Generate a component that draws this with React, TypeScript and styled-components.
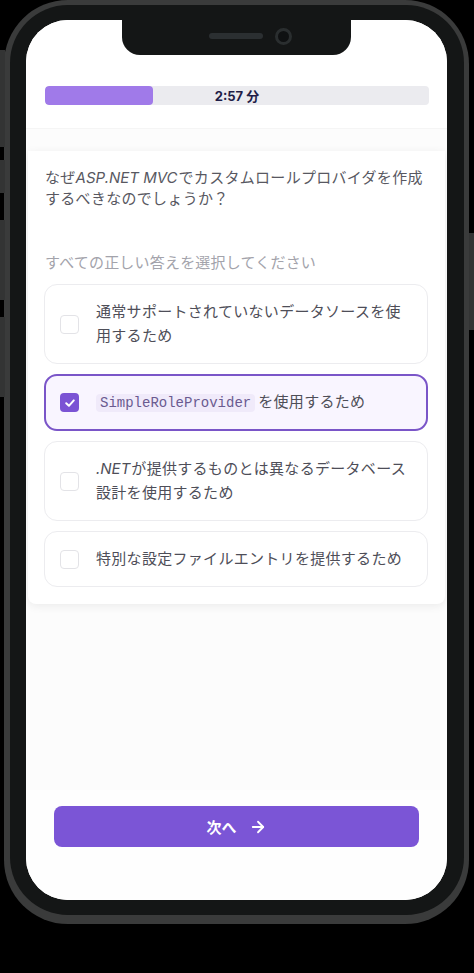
import styled, { createGlobalStyle } from "styled-components";
import { ArrowRight } from "lucide-react";

const GlobalStyle = createGlobalStyle`
  html, body {
    margin: 0;
    padding: 0;
    background: #000;
  }
  * {
    box-sizing: border-box;
  }
`;

const options = [
  { id: "a", checked: false },
  { id: "b", checked: true },
  { id: "c", checked: false },
  { id: "d", checked: false },
];

const elapsed = 0.28;

const Phone = styled.div`
  position: relative;
  width: 465px;
  height: 924px;
  margin-left: 4px;
  padding: 5px 5px 9px 6px;
  background: #3a3b3b;
  border-radius: 64px;
`;

const SideButton = styled.span<{ $top: number; $height: number; $right?: boolean }>`
  position: absolute;
  top: ${(p) => p.$top}px;
  height: ${(p) => p.$height}px;
  width: 5px;
  ${(p) => (p.$right ? "right: -5px;" : "left: -4px;")}
  background: #333434;
`;

const Bezel = styled.div`
  height: 100%;
  padding: 15px 17px 15px 16px;
  background: #141616;
  border-radius: 58px;
`;

const Screen = styled.div`
  position: relative;
  height: 100%;
  display: flex;
  flex-direction: column;
  background: #fff;
  border-radius: 42px;
  overflow: hidden;
  font-family: "Inter", "Noto Sans CJK JP", sans-serif;
`;

const Notch = styled.div`
  position: absolute;
  top: 0;
  left: 96px;
  width: 229px;
  height: 35px;
  display: flex;
  align-items: center;
  gap: 12px;
  padding: 0 0 3px 87px;
  background: #141616;
  border-radius: 0 0 18px 18px;
`;

const Speaker = styled.span`
  width: 54px;
  height: 6px;
  border-radius: 3px;
  background: #2b2f31;
`;

const Camera = styled.span`
  width: 17px;
  height: 17px;
  border-radius: 50%;
  border: 3px solid #2a2e2f;
  background: #0f1112;
`;

const Header = styled.header`
  padding: 66px 18px 23px 19px;
  background: #fff;
`;

const Progress = styled.div`
  display: grid;
  height: 19px;
  border-radius: 4px;
  background: #ebebef;
  overflow: hidden;

  & > * {
    grid-area: 1 / 1;
  }
`;

const ProgressFill = styled.div`
  justify-self: start;
  height: 100%;
  border-radius: 4px;
  background: #a07ae9;
`;

const Timer = styled.span`
  align-self: center;
  justify-self: center;
  font-size: 13px;
  font-weight: 700;
  color: #1f1d47;
`;

const Main = styled.main`
  flex: 1;
  padding-top: 22px;
  background: #fcfcfc;
  border-top: 1px solid #f5f5f5;
`;

const Card = styled.section`
  margin: 0 2px;
  padding: 16px 17px 17px 16px;
  background: #fff;
  border-radius: 0 0 8px 8px;
  box-shadow: 0 2px 10px rgba(0, 0, 0, 0.07);
`;

const Question = styled.p`
  margin: 0 0 42px 1px;
  font-size: 15px;
  line-height: 21px;
  letter-spacing: 0.3px;
  color: #585861;
`;

const Hint = styled.p`
  margin: 0 0 9px 1px;
  font-size: 15px;
  line-height: 24px;
  letter-spacing: 0.2px;
  color: #a3a3ab;
`;

const Latin = styled.em`
  font-style: italic;
  letter-spacing: 0;
  margin-right: 1px;
`;

const OptionList = styled.div`
  display: flex;
  flex-direction: column;
  gap: 10px;
`;

const Option = styled.label<{ $checked: boolean }>`
  display: flex;
  align-items: center;
  gap: 17px;
  padding: ${(p) => (p.$checked ? "14px 14px" : "15px 15px")};
  border: ${(p) => (p.$checked ? "2px solid #7a55c8" : "1px solid #ececef")};
  border-radius: 13px;
  background: ${(p) => (p.$checked ? "#f9f5ff" : "#fff")};
  font-size: 15px;
  line-height: 24px;
  letter-spacing: 0.3px;
  color: #4e4e58;
`;

const Box = styled.span<{ $checked: boolean }>`
  flex: none;
  display: flex;
  align-items: center;
  justify-content: center;
  width: 19px;
  height: 19px;
  border-radius: 4px;
  border: ${(p) => (p.$checked ? "none" : "1.5px solid #e3e3e7")};
  background: ${(p) => (p.$checked ? "#7b53d4" : "#fff")};
`;

const Code = styled.code`
  margin-right: 3px;
  padding: 1px 4px;
  border-radius: 4px;
  background: #f0eafa;
  font-family: "Liberation Mono", monospace;
  font-size: 14px;
  letter-spacing: 0;
  color: #6a5a90;
`;

const Footer = styled.footer`
  padding: 16px 28px 53px;
  background: #fefefe;
`;

const NextButton = styled.button`
  width: 100%;
  height: 41px;
  display: flex;
  align-items: center;
  justify-content: center;
  gap: 12px;
  border: none;
  border-radius: 8px;
  background: #7b55d6;
  color: #fff;
  font-family: "Inter", "Noto Sans CJK JP", sans-serif;
  font-size: 15px;
  font-weight: 700;
`;

const Check = () => (
  <svg width="12" height="12" viewBox="0 0 12 12" fill="none">
    <polyline
      points="2.2,6.3 4.9,8.8 9.8,3.4"
      stroke="#fff"
      strokeWidth="2"
      strokeLinecap="round"
      strokeLinejoin="round"
    />
  </svg>
);

const optionText: Record<string, React.ReactNode> = {
  a: "通常サポートされていないデータソースを使用するため",
  b: (
    <>
      <Code>SimpleRoleProvider</Code>を使用するため
    </>
  ),
  c: (
    <>
      <Latin>.NET</Latin>が提供するものとは異なるデータベース設計を使用するため
    </>
  ),
  d: "特別な設定ファイルエントリを提供するため",
};

export default function App() {
  return (
    <>
      <GlobalStyle />
      <Phone>
        <SideButton $top={50} $height={97} />
        <SideButton $top={160} $height={33} />
        <SideButton $top={220} $height={80} />
        <SideButton $top={317} $height={80} />
        <SideButton $top={233} $height={97} $right />
        <Bezel>
          <Screen>
            <Header>
              <Progress>
                <ProgressFill style={{ width: `${elapsed * 100}%` }} />
                <Timer>2:57 分</Timer>
              </Progress>
            </Header>
            <Main>
              <Card>
                <Question>
                  なぜ<Latin>ASP.NET MVC</Latin>でカスタムロールプロバイダを作成するべきなのでしょうか？
                </Question>
                <Hint>すべての正しい答えを選択してください</Hint>
                <OptionList>
                  {options.map((o) => (
                    <Option key={o.id} $checked={o.checked}>
                      <Box $checked={o.checked}>{o.checked && <Check />}</Box>
                      <span>{optionText[o.id]}</span>
                    </Option>
                  ))}
                </OptionList>
              </Card>
            </Main>
            <Footer>
              <NextButton>
                次へ
                <ArrowRight size={18} strokeWidth={2.4} />
              </NextButton>
            </Footer>
            <Notch>
              <Speaker />
              <Camera />
            </Notch>
          </Screen>
        </Bezel>
      </Phone>
    </>
  );
}
